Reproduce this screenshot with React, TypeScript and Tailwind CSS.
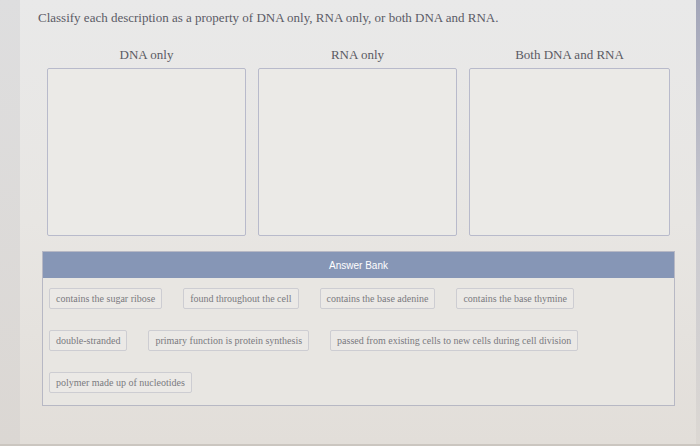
const serif = "font-['Liberation_Serif','Times_New_Roman',serif]";

const Chip = ({ text }: { text: string }) => (
  <div className="h-[21px] flex items-center px-[6px] border border-[#cdcdd2] rounded-[2px] bg-[#ebe9e6] text-[10px] text-[#7a7a80] whitespace-nowrap">
    {text}
  </div>
);

const columns = ["DNA only", "RNA only", "Both DNA and RNA"];

const rows = [
  [
    "contains the sugar ribose",
    "found throughout the cell",
    "contains the base adenine",
    "contains the base thymine",
  ],
  ["double-stranded", "primary function is protein synthesis", "passed from existing cells to new cells during cell division"],
  ["polymer made up of nucleotides"],
];

export default function App() {
  return (
    <div className={`w-[700px] h-[446px] flex flex-col overflow-hidden ${serif}`}>
      <div className="flex flex-1 bg-gradient-to-b from-[#e9e9e9] via-[#e8e6e3] to-[#e2ded9]">
        {/* left edge of the monitor */}
        <div className="w-[20px] bg-gradient-to-b from-[#dededf] to-[#dbd7d3]" />

        <div className="flex-1 flex flex-col">
          <p className="pl-[18px] pt-[10px] text-[13px] leading-[16px] text-[#5b5b66]">
            Classify each description as a property of DNA only, RNA only, or both DNA and RNA.
          </p>

          {/* drop targets */}
          <div className="pl-[27px] pt-[21px] grid grid-cols-[199px_199px_201px] gap-x-[12px]">
            {columns.map((c) => (
              <div key={c} className="flex flex-col">
                <div className="text-center text-[13px] leading-[16px] text-[#5a5a63]">{c}</div>
                <div className="mt-[5px] h-[168px] border-[1.5px] border-[#b8bacb] rounded-[2px] bg-[#ebeae7]" />
              </div>
            ))}
          </div>

          {/* answer bank */}
          <div className="ml-[22px] mt-[15px] w-[633px] border border-[#b7b8c4] bg-[#e8e6e2]">
            <div className="h-[26px] flex items-center justify-center bg-[#8696b6] text-white text-[10px] font-['Liberation_Sans',Arial,sans-serif]">
              Answer Bank
            </div>
            <div className="flex flex-col gap-[21px] px-[6px] pt-[10px] pb-[12px]">
              {rows.map((r, i) => (
                <div key={i} className="flex gap-[21px]">
                  {r.map((t) => (
                    <Chip key={t} text={t} />
                  ))}
                </div>
              ))}
            </div>
          </div>
        </div>

        {/* right edge */}
        <div className="w-[4px] bg-gradient-to-b from-[#a3a6b9] via-[#c9c9d0] to-[#dcd8d3]" />
      </div>
      <div className="h-[2px] bg-[#cbc6c0]" />
    </div>
  );
}
